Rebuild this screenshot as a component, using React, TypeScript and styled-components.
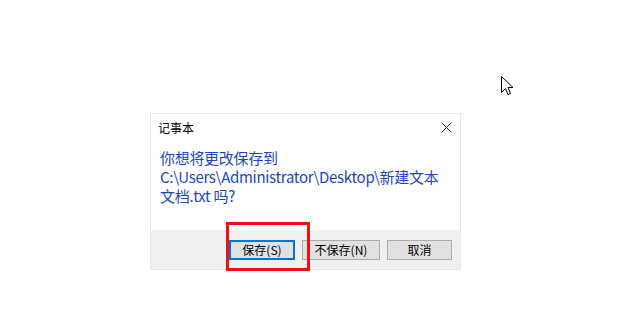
import React, { FC } from 'react'
import styled, { createGlobalStyle, css } from 'styled-components'

const GlobalStyle = createGlobalStyle`
  html, body {
    margin: 0;
    padding: 0;
    background: #ffffff;
  }
  body {
    font-family: "Noto Sans CJK SC", "Noto Sans", sans-serif;
  }
`

const Page = styled.div`
  position: relative;
  width: 620px;
  height: 309px;
  padding: 113px 0 0 150px;
  box-sizing: border-box;
  overflow: hidden;
`

const Dialog = styled.div`
  position: relative;
  width: 311px;
  height: 157px;
  box-sizing: border-box;
  border: 1px solid #e6e6e6;
  background: #ffffff;
  display: flex;
  flex-direction: column;
`

const TitleBar = styled.div`
  height: 27px;
  display: flex;
  align-items: center;
  justify-content: space-between;
  padding: 0 7px 0 7px;
  font-size: 12px;
  color: #000000;
`

const Close = styled.div`
  width: 14px;
  height: 14px;
  display: flex;
  align-items: center;
  justify-content: center;
`

const Body = styled.div`
  flex: 1;
  padding: 7px 10px 0 9px;
`

const Message = styled.div`
  font-family: "Noto Sans CJK SC", "Noto Sans", sans-serif;
  font-size: 15px;
  line-height: 19px;
  color: #1b46c2;
  letter-spacing: -0.3px;
`

const Footer = styled.div`
  height: 39px;
  background: #f0f0f0;
  display: flex;
  align-items: center;
  justify-content: flex-end;
  gap: 7px;
  padding: 0 8px 0 0;
`

const Button = styled.button<{ primary?: boolean; w: number }>`
  height: 20px;
  width: ${p => p.w}px;
  box-sizing: border-box;
  background: #e1e1e1;
  border: 1px solid #adadad;
  font-family: "Noto Sans CJK SC", "Noto Sans", sans-serif;
  font-size: 12px;
  line-height: 16px;
  color: #000000;
  padding: 0;
  ${p => p.primary && css`
    border: 2px solid #0078d7;
  `};
`

const Highlight = styled.div`
  position: absolute;
  left: 75px;
  top: 108px;
  width: 84px;
  height: 49px;
  box-sizing: border-box;
  border: 3px solid #f01010;
  pointer-events: none;
`

const Cursor = styled.svg`
  position: absolute;
  left: 501px;
  top: 76px;
`

const App: FC = () => (
  <>
    <GlobalStyle />
    <Page>
      <Dialog>
        <TitleBar>
          <span>记事本</span>
          <Close>
            <svg width="11" height="11" viewBox="0 0 11 11">
              <path d="M0.5 0.5 L10.5 10.5 M10.5 0.5 L0.5 10.5" stroke="#222" strokeWidth="1" />
            </svg>
          </Close>
        </TitleBar>
        <Body>
          <Message>
            你想将更改保存到
            <br />
            C:\Users\Administrator\Desktop\新建文本
            <br />
            文档.txt 吗?
          </Message>
        </Body>
        <Footer>
          <Button primary w={66}>保存(S)</Button>
          <Button w={78}>不保存(N)</Button>
          <Button w={65}>取消</Button>
        </Footer>
        <Highlight />
      </Dialog>
      <Cursor width="13" height="21" viewBox="0 0 13 21">
        <path
          d="M0.5 0.5 L0.5 16.5 L4.5 12.5 L7 18.5 L9.5 17.5 L7 11.5 L12 11.5 Z"
          fill="#ffffff"
          stroke="#000000"
          strokeWidth="1"
          strokeLinejoin="miter"
        />
      </Cursor>
    </Page>
  </>
)

export default App
